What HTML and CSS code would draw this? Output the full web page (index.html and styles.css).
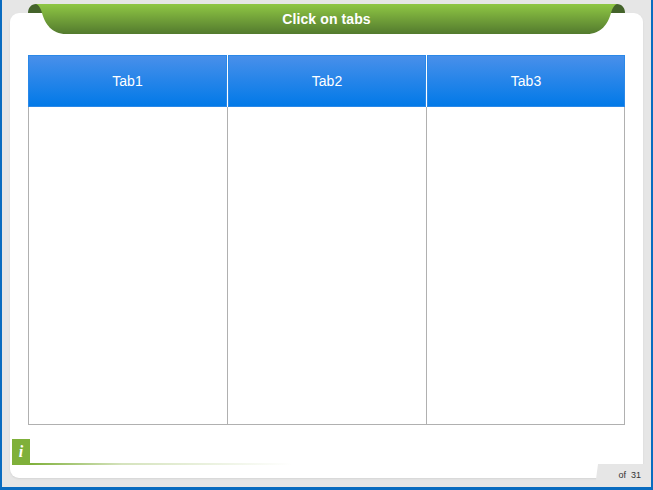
FILE: index.html
```html
<!DOCTYPE html>
<html>
    <head>
        <meta charset="utf-8" />
        <link rel="stylesheet" href="styles.css">
    </head>

    <body>
        <div class="frame">
            <div class="banner">
                <svg class="banner-art" width="597" height="30" viewBox="0 0 597 30">
                    <defs>
                        <linearGradient id="green" x1="0" y1="0" x2="0" y2="1">
                            <stop offset="0" stop-color="#8fc744" />
                            <stop offset="1" stop-color="#537a2e" />
                        </linearGradient>
                    </defs>
                    <path d="M0 9 C0 4 3 0 8 0 L20 0 L20 9 Z" fill="#44632a" />
                    <path d="M597 9 C597 4 594 0 589 0 L577 0 L577 9 Z" fill="#44632a" />
                    <path d="M8 0 C11 1 13 5 14 9 C17 20 24 30 38 30 H559 C573 30 580 20 583 9 C584 5 586 1 589 0 Z" fill="url(#green)" />
                </svg>
                <span class="banner-title">Click on tabs</span>
            </div>

            <div class="panel">
                <div class="tabs">
                    <div class="tab">
                        <div class="tab-head">Tab1</div>
                        <div class="tab-body"></div>
                    </div>
                    <div class="tab">
                        <div class="tab-head">Tab2</div>
                        <div class="tab-body"></div>
                    </div>
                    <div class="tab">
                        <div class="tab-head">Tab3</div>
                        <div class="tab-body"></div>
                    </div>
                </div>

                <div class="info">
                    <div class="info-icon">i</div>
                    <div class="info-line"></div>
                </div>
            </div>

            <div class="pager">of&nbsp; 31</div>
        </div>
    </body>
</html>
```

FILE: styles.css
```css
html, body {
    margin: 0;
    padding: 0;
}

body {
    width: 653px;
    height: 490px;
    overflow: hidden;
    font-family: "Liberation Sans", Arial, sans-serif;
}

.frame {
    position: relative;
    box-sizing: border-box;
    width: 653px;
    height: 490px;
    padding: 13px 8px 0 8px;
    background: #e6e6e6;
    border-left: 2px solid #0a6cc0;
    border-right: 2px solid #0a6cc0;
    border-bottom: 3px solid #0a6cc0;
}

.banner {
    position: absolute;
    left: 26px;
    top: 4px;
    width: 597px;
    height: 30px;
    z-index: 1;
}

.banner-art {
    display: block;
}

.banner-title {
    position: absolute;
    left: 0;
    right: 0;
    top: 7px;
    text-align: center;
    font-size: 14px;
    font-weight: bold;
    letter-spacing: 0.1px;
    line-height: 16px;
    color: #fff;
}

.panel {
    box-sizing: border-box;
    height: 465px;
    padding: 42px 18px 0 18px;
    background: #fff;
    border-radius: 9px;
    box-shadow: 0 1px 2px #d4d4d4;
}

.tabs {
    display: grid;
    grid-template-columns: 199px 198px 198px;
    column-gap: 1px;
    height: 370px;
}

.tab {
    display: flex;
    flex-direction: column;
}

.tab-head {
    height: 52px;
    line-height: 52px;
    text-align: center;
    font-size: 14px;
    color: #fff;
    background: linear-gradient(#4a90ea, #0079e8);
    box-shadow: inset 0 0 0 1px #2a88e8;
}

.tab-body {
    flex: 1;
    border-left: 1px solid #b0b0b0;
    border-bottom: 1px solid #b0b0b0;
}

.tab + .tab .tab-body {
    margin-left: -1px;
}

.tab:last-child .tab-body {
    border-right: 1px solid #b0b0b0;
}

.info {
    display: flex;
    align-items: flex-end;
    margin: 14px 0 0 -16px;
}

.info-icon {
    width: 18px;
    height: 26px;
    line-height: 26px;
    text-align: center;
    background: #7fb03a;
    color: #fff;
    font-family: "Liberation Serif", serif;
    font-size: 16px;
    font-weight: bold;
    font-style: italic;
}

.info-line {
    width: 262px;
    height: 2px;
    background: linear-gradient(to right, #7fb03a, #d5e3bd 35%, #fff);
}

.pager {
    position: absolute;
    right: 0;
    bottom: 0;
    box-sizing: border-box;
    width: 56px;
    height: 23px;
    padding-right: 10px;
    line-height: 22px;
    text-align: right;
    font-size: 9px;
    color: #333;
    background: #e6e6e6;
    clip-path: polygon(3px 0, 100% 0, 100% 100%, 0 100%);
}
```
